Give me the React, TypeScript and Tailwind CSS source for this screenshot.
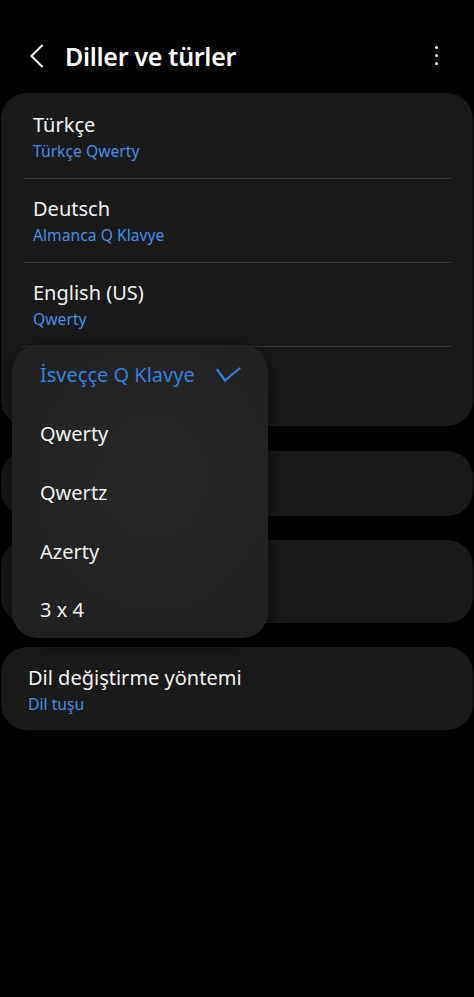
import React from "react";

const font = { fontFamily: '"Noto Sans", "Open Sans", Roboto, sans-serif' };

function Row({ title, sub, divider = true }: { title: string; sub: string; divider?: boolean }) {
  return (
    <div>
      <div className="pl-[32px] pr-[22px] pt-[17px] pb-[16px]">
        <div className="text-[20px] leading-[26px] text-[#f2f2f2]">{title}</div>
        <div className="mt-[2px] text-[15.7px] leading-[22px] text-[#3f8de6]">{sub}</div>
      </div>
      {divider && <div className="mx-[22px] h-px bg-[#3a3a3a]" />}
    </div>
  );
}

export default function App() {
  const options = ["Qwerty", "Qwertz", "Azerty", "3 x 4"];
  return (
    <div className="relative w-[474px] min-h-[997px] bg-black" style={font}>
      {/* Header */}
      <div className="flex h-[93px] items-center pt-[18px]">
        <div className="flex w-[65px] justify-center pl-[8px]">
          <svg width="16" height="24" viewBox="0 0 16 24" fill="none">
            <path d="M13 1.5 L2.5 12 L13 22.5" stroke="#f2f2f2" strokeWidth="2" strokeLinecap="round" strokeLinejoin="round" />
          </svg>
        </div>
        <div className="flex-1 text-[25px] font-semibold leading-[32px] text-white tracking-[-0.3px]">Diller ve türler</div>
        <div className="mr-[36px] flex flex-col items-center gap-[5px]">
          <span className="block h-[3px] w-[3px] rounded-full bg-white" />
          <span className="block h-[3px] w-[3px] rounded-full bg-white" />
          <span className="block h-[3px] w-[3px] rounded-full bg-white" />
        </div>
      </div>

      {/* Card 1 */}
      <div className="mx-[1px] rounded-[26px] bg-[#1a1a1a] pt-[2px]">
        <Row title="Türkçe" sub="Türkçe Qwerty" />
        <Row title="Deutsch" sub="Almanca Q Klavye" />
        <Row title="English (US)" sub="Qwerty" />
        <div className="h-[79px]" />
      </div>

      {/* Card 2 */}
      <div className="mx-[1px] mt-[25px] h-[65px] rounded-[26px] bg-[#1a1a1a]" />

      {/* Card 3 */}
      <div className="mx-[1px] mt-[24px] h-[83px] rounded-[26px] bg-[#1a1a1a]" />

      {/* Card 4 */}
      <div className="mx-[1px] mt-[24px] rounded-[26px] bg-[#1a1a1a] pl-[27px] pr-[22px] pt-[18px] pb-[15px]">
        <div className="text-[20px] leading-[26px] text-[#f2f2f2]">Dil değiştirme yöntemi</div>
        <div className="mt-[2px] text-[15.7px] leading-[22px] text-[#3f8de6]">Dil tuşu</div>
      </div>

      {/* Popup menu */}
      <div className="absolute left-[12px] top-[345px] h-[293px] w-[256px] overflow-hidden rounded-[26px] bg-[radial-gradient(ellipse_at_55%_45%,#272727_0%,#222222_70%)] pt-[1px] shadow-[0_4px_18px_rgba(0,0,0,0.6)]">
        <div className="flex h-[58.75px] items-center justify-between pl-[28px] pr-[27px]">
          <span className="text-[20px] text-[#2f80dc]">İsveççe Q Klavye</span>
          <svg width="26" height="16" viewBox="0 0 26 16" fill="none">
            <path d="M2.5 3 L10 13.5 L24.5 1.5" stroke="#2f80dc" strokeWidth="2.2" strokeLinecap="round" strokeLinejoin="round" />
          </svg>
        </div>
        {options.map((o) => (
          <div key={o} className="flex h-[58.75px] items-center pl-[28px] text-[20px] text-[#f0f0f0]">
            {o}
          </div>
        ))}
      </div>
    </div>
  );
}
